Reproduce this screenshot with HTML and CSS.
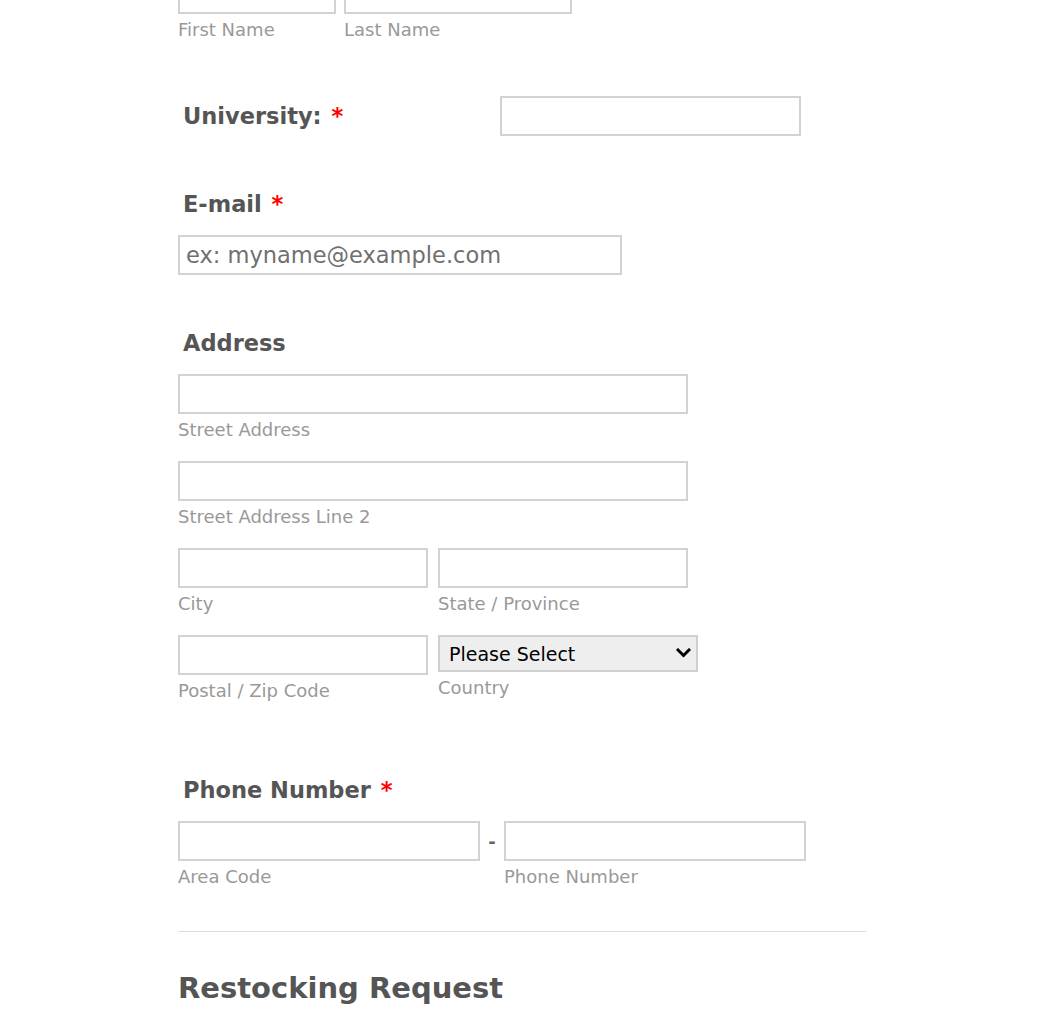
FILE: index.html
```html
<!DOCTYPE html>
<html lang="en">
<head>
    <meta http-equiv="Content-Type" content="text/html; charset=utf-8" />
    <title>Restocking Request</title>
    <link rel="stylesheet" href="styles.css">
</head>
<body>
    <form class="form-all">
        <div class="form-line name-line">
            <div class="input-row">
                <span class="sub-field">
                    <input type="text" class="input-first">
                    <label class="sub-label">First Name</label>
                </span>
                <span class="sub-field">
                    <input type="text" class="input-last">
                    <label class="sub-label">Last Name</label>
                </span>
            </div>
        </div>

        <div class="form-line inline-line">
            <label class="form-label label-left">University: <span class="required">*</span></label>
            <input type="text" class="input-university">
        </div>

        <div class="form-line">
            <label class="form-label">E-mail <span class="required">*</span></label>
            <input type="email" class="input-email" placeholder="ex: myname@example.com">
        </div>

        <div class="form-line address-line">
            <label class="form-label">Address</label>
            <div class="address-grid">
                <span class="sub-field full">
                    <input type="text" class="input-wide">
                    <label class="sub-label">Street Address</label>
                </span>
                <span class="sub-field full">
                    <input type="text" class="input-wide">
                    <label class="sub-label">Street Address Line 2</label>
                </span>
                <span class="sub-field">
                    <input type="text" class="input-half">
                    <label class="sub-label">City</label>
                </span>
                <span class="sub-field">
                    <input type="text" class="input-half">
                    <label class="sub-label">State / Province</label>
                </span>
                <span class="sub-field">
                    <input type="text" class="input-half">
                    <label class="sub-label">Postal / Zip Code</label>
                </span>
                <span class="sub-field">
                    <span class="select-wrap">
                        <select class="input-country">
                            <option>Please Select</option>
                            <option>United States</option>
                            <option>Canada</option>
                        </select>
                        <svg class="select-arrow" width="15" height="10" viewBox="0 0 15 10">
                            <polyline points="2,2 7.5,7.5 13,2" fill="none" stroke="#000" stroke-width="3" stroke-linecap="square" stroke-linejoin="miter"/>
                        </svg>
                    </span>
                    <label class="sub-label">Country</label>
                </span>
            </div>
        </div>

        <div class="form-line phone-line">
            <label class="form-label">Phone Number <span class="required">*</span></label>
            <div class="input-row">
                <span class="sub-field">
                    <input type="tel" class="input-phone">
                    <label class="sub-label">Area Code</label>
                </span>
                <span class="phone-sep">-</span>
                <span class="sub-field">
                    <input type="tel" class="input-phone">
                    <label class="sub-label">Phone Number</label>
                </span>
            </div>
        </div>

        <div class="form-line section-line">
            <h2 class="form-header">Restocking Request</h2>
        </div>
    </form>
</body>
</html>
```

FILE: styles.css
```css
body {
    margin: 0;
    background-color: #ffffff;
    font-family: "DejaVu Sans", Verdana, sans-serif;
    color: #555;
}

.form-all {
    margin-top: -26px;
    padding-left: 178px;
    width: 688px;
}

.form-line {
    padding: 27px 0;
}

.name-line {
    padding-top: 0;
}

.form-label {
    display: block;
    padding-left: 5px;
    margin-bottom: 17px;
    font-size: 22.5px;
    line-height: 28px;
    font-weight: bold;
    color: #555;
}

.required {
    color: #f00;
    margin-left: 2px;
}

.inline-line {
    display: flex;
    align-items: center;
}

.label-left {
    width: 317px;
    margin-bottom: 0;
}

input[type="text"],
input[type="email"],
input[type="tel"] {
    box-sizing: border-box;
    height: 40px;
    margin: 0;
    padding: 0 6px;
    border: 2px solid #d2d2d2;
    background-color: #fff;
    font-family: "DejaVu Sans", Verdana, sans-serif;
    font-size: 22.5px;
    color: #555;
}

input::placeholder {
    color: #707070;
}

.input-row {
    display: flex;
    align-items: flex-start;
}

.sub-field {
    display: flex;
    flex-direction: column;
}

.sub-label {
    margin-top: 4px;
    font-size: 18px;
    line-height: 24px;
    color: #999;
}

.input-first {
    width: 158px;
}

.name-line .sub-field + .sub-field {
    margin-left: 8px;
}

.input-last {
    width: 228px;
}

.input-university {
    width: 301px;
}

.input-email {
    width: 444px;
}

.address-grid {
    display: grid;
    grid-template-columns: 250px 260px;
    column-gap: 10px;
    row-gap: 19px;
}

.sub-field.full {
    grid-column: 1 / 3;
}

.input-wide {
    width: 510px;
}

.input-half {
    width: 250px;
}

.select-wrap {
    position: relative;
    display: block;
    width: 260px;
}

.input-country {
    box-sizing: border-box;
    width: 260px;
    height: 37px;
    margin: 0;
    padding: 0 30px 0 9px;
    border: 2px solid #cfcfcf;
    border-radius: 0;
    appearance: none;
    -webkit-appearance: none;
    background-color: #eeeeee;
    font-family: "DejaVu Sans", Verdana, sans-serif;
    font-size: 19px;
    color: #000;
}

.select-arrow {
    position: absolute;
    right: 7px;
    top: 13px;
    pointer-events: none;
}

.address-line {
    padding-bottom: 46px;
}

.phone-line {
    padding-bottom: 42px;
    border-bottom: 1px solid #dedede;
}

.input-phone {
    width: 302px;
}

.phone-sep {
    width: 24px;
    text-align: center;
    line-height: 42px;
    font-size: 18px;
    font-weight: bold;
    color: #666;
}

.section-line {
    padding-top: 38px;
}

.form-header {
    margin: 0;
    font-size: 29px;
    line-height: 36px;
    font-weight: bold;
    color: #555;
}
```
